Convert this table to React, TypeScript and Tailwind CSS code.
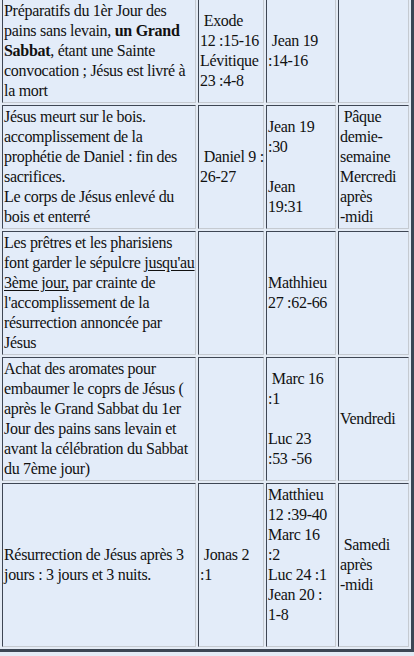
import type { ReactNode } from "react";

type Row = {
  cells: ReactNode[][];
};

const sp = "\u00a0";

const rows: Row[] = [
  {
    cells: [
      [
        "Préparatifs du 1èr Jour des",
        <>
          pains sans levain, <b>un Grand</b>
        </>,
        <>
          <b>Sabbat</b>, étant une Sainte
        </>,
        "convocation ; Jésus est livré à",
        "la mort",
      ],
      [sp + "Exode", "12 :15-16", "Lévitique", "23 :4-8"],
      [sp + "Jean 19", ":14-16"],
      [],
    ],
  },
  {
    cells: [
      [
        "Jésus meurt sur le bois.",
        "accomplissement de la",
        "prophétie de Daniel : fin des",
        "sacrifices.",
        "Le corps de Jésus enlevé du",
        "bois et enterré",
      ],
      [sp + "Daniel 9 :", "26-27"],
      ["Jean 19", ":30", sp, "Jean", "19:31"],
      [sp + "Pâque", "demie-", "semaine", "Mercredi", "après", "-midi"],
    ],
  },
  {
    cells: [
      [
        "Les prêtres et les pharisiens",
        <>
          font garder le sépulcre <u className="underline-offset-2">jusqu'au</u>
        </>,
        <>
          <u className="underline-offset-2">3ème jour,</u> par crainte de
        </>,
        "l'accomplissement de la",
        "résurrection annoncée par",
        "Jésus",
      ],
      [],
      ["Mathhieu", "27 :62-66"],
      [],
    ],
  },
  {
    cells: [
      [
        "Achat des aromates pour",
        "embaumer le coprs de Jésus (",
        "après le Grand Sabbat du 1er",
        "Jour des pains sans levain et",
        "avant la célébration du Sabbat",
        "du 7ème jour)",
      ],
      [],
      [sp + "Marc 16", ":1", sp, "Luc 23", ":53 -56"],
      ["Vendredi"],
    ],
  },
  {
    cells: [
      ["Résurrection de Jésus après 3", "jours : 3 jours et 3 nuits."],
      [sp + "Jonas 2", ":1"],
      ["Matthieu", "12 :39-40", "Marc 16", ":2", "Luc 24 :1", "Jean 20 :", "1-8", sp],
      [sp + "Samedi", "après", "-midi"],
    ],
  },
];

const widths = ["w-[194px]", "w-[66px]", "w-[70px]", "w-[71px]"];

function Cell({ lines, width }: { lines: ReactNode[]; width?: string }) {
  return (
    <td
      className={`${width ?? ""} border border-t-[#3e4654] border-l-[#3e4654] border-b-[#c5cad1] border-r-[#c5cad1] bg-[#e3ecf9] p-[1px] align-middle whitespace-nowrap`}
    >
      {lines.map((line, i) => (
        <div key={i}>{line}</div>
      ))}
    </td>
  );
}

export default function App() {
  return (
    <div className="h-[656px] w-[414px] overflow-hidden bg-[#e4ebf5] font-['Liberation_Serif',serif] text-[16px] leading-[20px] tracking-[-0.3px] text-[#111]">
      <table className="-ml-[3px] -mt-[6px] w-[417px] table-fixed border-separate border-spacing-[2px] border-[3px] border-t-[#eef2f8] border-l-[#eef2f8] border-b-[#3c4654] border-r-[#3c4654] bg-[#e4ebf5]">
        <tbody>
          {rows.map((row, r) => (
            <tr key={r}>
              {row.cells.map((lines, c) => (
                <Cell key={c} lines={lines} width={r === 0 ? widths[c] : undefined} />
              ))}
            </tr>
          ))}
        </tbody>
      </table>
    </div>
  );
}
